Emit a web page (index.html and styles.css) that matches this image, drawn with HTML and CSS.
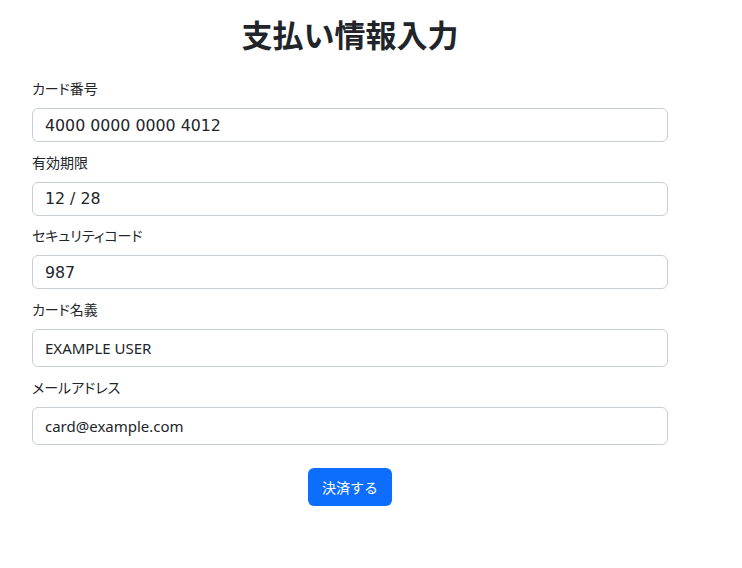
FILE: index.html
```html
<!DOCTYPE html>
<html lang="ja">
<head>
<meta charset="utf-8">
<title>支払い情報入力</title>
<link rel="stylesheet" href="styles.css">
</head>
<body>
<main class="page">
  <h1 class="title">支払い情報入力</h1>
  <form class="form">
    <div class="field">
      <label class="label">カード番号</label>
      <input class="input input-num" type="text" value="4000 0000 0000 4012">
    </div>
    <div class="field">
      <label class="label">有効期限</label>
      <input class="input input-num" type="text" value="12 / 28">
    </div>
    <div class="field">
      <label class="label">セキュリティコード</label>
      <input class="input input-num" type="text" value="987">
    </div>
    <div class="field field-tall">
      <label class="label">カード名義</label>
      <input class="input input-text" type="text" value="EXAMPLE USER">
    </div>
    <div class="field field-tall">
      <label class="label">メールアドレス</label>
      <input class="input input-text" type="text" value="card@example.com">
    </div>
    <div class="actions">
      <button class="btn" type="button">決済する</button>
    </div>
  </form>
</main>
</body>
</html>
```
FILE: styles.css
```css
* { box-sizing: border-box; }
html, body { margin: 0; padding: 0; background: #fff; }
body {
  font-family: "Noto Sans CJK JP", "Noto Sans", sans-serif;
  color: #212529;
}
.page {
  width: 636px;
  margin-left: 32px;
  padding-top: 14px;
}
.title {
  margin: 0 0 24px;
  text-align: center;
  font-size: 31px;
  line-height: 40px;
  font-weight: 700;
  color: #212529;
}
.form {
  display: flex;
  flex-direction: column;
}
.field {
  display: flex;
  flex-direction: column;
  gap: 10px;
  margin-bottom: 9.5px;
}
.field-tall {
  margin-bottom: 10.5px;
}
.label {
  font-size: 14px;
  line-height: 20px;
  font-feature-settings: "palt";
  color: #212529;
}
.input {
  width: 100%;
  border: 1px solid #c9ced4;
  border-radius: 6px;
  padding: 0 12px;
  color: #212529;
  background: #fff;
  outline: none;
}
.input-num {
  height: 34px;
  font-family: "DejaVu Sans", sans-serif;
  font-size: 15.8px;
}
.input-text {
  height: 38px;
  font-family: "Noto Sans", sans-serif;
  font-size: 15px;
}
.actions {
  display: flex;
  justify-content: center;
  margin-top: 12px;
}
.btn {
  height: 38px;
  padding: 0 14px;
  border: none;
  border-radius: 6px;
  background: #0d6efd;
  color: #fff;
  font-family: "Noto Sans CJK JP", sans-serif;
  font-size: 14px;
}
```
